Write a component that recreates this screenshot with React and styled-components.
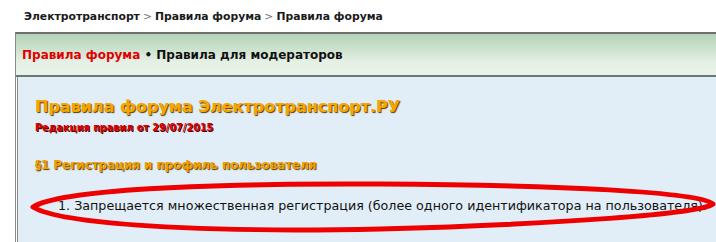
import React from "react"
import styled, { createGlobalStyle } from "styled-components"

const GlobalStyle = createGlobalStyle`
  html, body {
    margin: 0;
    padding: 0;
    background: #ffffff;
    overflow: hidden;
  }
  body {
    font-family: "DejaVu Sans", Verdana, sans-serif;
  }
`

const Page = styled.div`
  position: relative;
  width: 716px;
  height: 242px;
  padding-top: 9px;
  box-sizing: border-box;
  overflow: hidden;
`

const Breadcrumbs = styled.div`
  margin-left: 24px;
  height: 16px;
  font-size: 10.8px;
  font-weight: bold;
  color: #1a1a1a;
  line-height: 16px;
  white-space: nowrap;
`

const Sep = styled.span`
  color: #777;
  font-weight: normal;
  margin: 0 3px;
`

const Panel = styled.div`
  margin: 7px 0 0 15px;
  border-top: 2px solid #6f6f6f;
  border-left: 1px solid #8a8a8a;
  background: #ffffff;
`

const PanelHeader = styled.div`
  display: flex;
  align-items: center;
  height: 41px;
  padding-left: 6px;
  background: linear-gradient(to bottom, #b4d3b6 0%, #cfe3d0 40%, #e6f1e6 70%, #e9f3e9 100%);
  border-bottom: 2px solid #687a70;
  font-size: 12px;
  font-weight: bold;
  color: #111;
  white-space: nowrap;
`

const ActiveTab = styled.span`
  color: #e10000;
`

const PanelBody = styled.div`
  margin-left: 1px;
  border-left: 1px solid #8a8a8a;
  background: #e1eef7;
  padding: 18px 0 0 17px;
  height: 170px;
  box-sizing: border-box;
`

const Title = styled.div`
  font-size: 16px;
  font-weight: bold;
  color: #f6a600;
  text-shadow: 1px 1px 1px #5a3a00;
  line-height: 24px;
  white-space: nowrap;
`

const Edition = styled.div`
  margin-top: 3px;
  font-size: 9.7px;
  font-weight: bold;
  color: #e00000;
  text-shadow: 1px 1px 0 #4a0000;
  line-height: 12px;
  white-space: nowrap;
`

const Section = styled.div`
  margin-top: 23px;
  font-size: 11.9px;
  font-weight: bold;
  color: #f2a000;
  text-shadow: 1px 1px 1px #5a3a00;
  line-height: 16px;
  white-space: nowrap;
`

const Rule = styled.div`
  margin: 25px 0 0 23px;
  font-size: 12.7px;
  color: #111;
  line-height: 16px;
  white-space: nowrap;
`

const Mark = styled.svg`
  position: absolute;
  left: 0;
  top: 0;
  width: 716px;
  height: 242px;
  pointer-events: none;
`

export default function App() {
  return (
    <>
      <GlobalStyle />
      <Page>
        <Breadcrumbs>
          Электротранспорт<Sep>&gt;</Sep>Правила форума<Sep>&gt;</Sep>Правила форума
        </Breadcrumbs>
        <Panel>
          <PanelHeader>
            <ActiveTab>Правила форума</ActiveTab>&nbsp;• Правила для модераторов
          </PanelHeader>
          <PanelBody>
            <Title>Правила форума Электротранспорт.РУ</Title>
            <Edition>Редакция правил от 29/07/2015</Edition>
            <Section>§1 Регистрация и профиль пользователя</Section>
            <Rule>
              1. Запрещается множественная регистрация (более одного идентификатора на пользователя).
            </Rule>
          </PanelBody>
        </Panel>
        <Mark viewBox="0 0 716 242">
          <path
            d="M 33 207 C 60 190, 200 183, 380 184 C 560 185, 700 192, 713 204 C 700 214, 560 224, 380 229 C 200 233, 60 224, 33 207 Z"
            fill="none"
            stroke="#ee0000"
            strokeWidth="5"
            strokeLinejoin="round"
          />
        </Mark>
      </Page>
    </>
  )
}
